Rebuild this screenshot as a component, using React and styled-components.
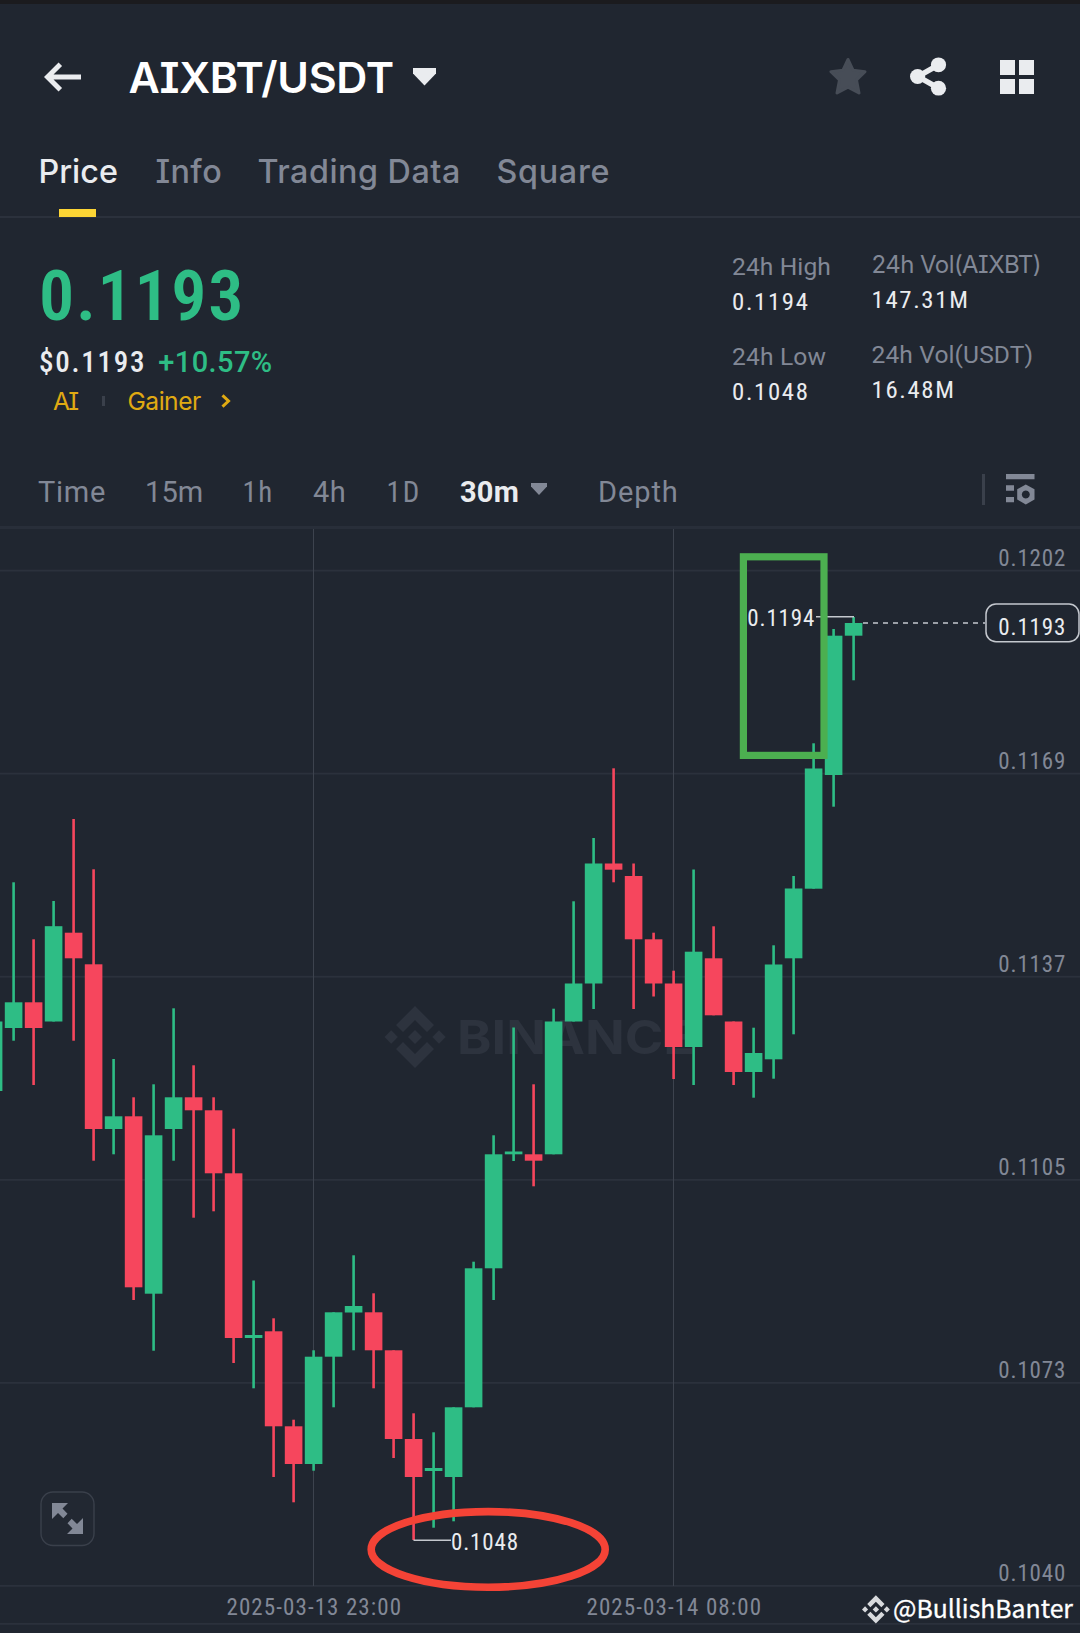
import styled, { createGlobalStyle } from 'styled-components';

const BG = '#202630';
const LINE = '#2b313c';
const GREY = '#828896';
const WHITE = '#EAECEF';
const GREEN = '#2EBD85';
const RED = '#F6465D';
const GOLD = '#E0AA12';

// [body top, body bottom, high, low, color]
const candles = [
  [1021.5, 1091, 1021.5, 1091, 'g'],
  [1002.3, 1028, 882.3, 1040.7, 'g'],
  [1002.3, 1028, 939.3, 1085, 'r'],
  [926.2, 1021.5, 901, 1021.5, 'g'],
  [932.7, 958.3, 819, 1040.7, 'r'],
  [964.3, 1129, 869.3, 1160.7, 'r'],
  [1116.3, 1129, 1059, 1154.3, 'g'],
  [1116.3, 1287.3, 1097.3, 1300, 'r'],
  [1135.3, 1293.7, 1084.3, 1350.7, 'g'],
  [1097.3, 1129, 1008.3, 1160.7, 'g'],
  [1097.3, 1110.3, 1065.3, 1217.7, 'r'],
  [1110.3, 1173.3, 1097.3, 1211.3, 'r'],
  [1173.3, 1338, 1128.7, 1363, 'r'],
  [1335, 1338, 1280.5, 1388.3, 'g'],
  [1331.3, 1426.3, 1318.3, 1477, 'r'],
  [1426.3, 1464, 1419.7, 1502.3, 'r'],
  [1356.7, 1464, 1350.3, 1470.7, 'g'],
  [1312.3, 1356.7, 1312.3, 1407.3, 'g'],
  [1306, 1312.5, 1255.3, 1350.3, 'g'],
  [1312.3, 1350.3, 1293.3, 1388.3, 'r'],
  [1350.3, 1439, 1350.3, 1458, 'r'],
  [1439, 1477, 1413.3, 1540, 'r'],
  [1468, 1471, 1432.3, 1527.7, 'g'],
  [1407.3, 1477, 1407.3, 1521.3, 'g'],
  [1268.3, 1407.3, 1261.7, 1407.3, 'g'],
  [1154.3, 1268.3, 1135.3, 1300, 'g'],
  [1151.5, 1154.3, 1027.5, 1161, 'g'],
  [1154.3, 1160.7, 1084.3, 1186.3, 'r'],
  [1021.5, 1154.3, 1008.7, 1154.3, 'g'],
  [983.5, 1021.5, 901.3, 1021.5, 'g'],
  [863.5, 983.5, 838, 1009, 'g'],
  [863.5, 869.7, 768.3, 882.3, 'r'],
  [876, 939.3, 863.5, 1009, 'r'],
  [939.3, 983.5, 932.7, 996.5, 'r'],
  [983.5, 1047, 970.7, 1079, 'r'],
  [951.7, 1047, 869.5, 1085, 'g'],
  [958.3, 1015.3, 926.3, 1015.3, 'r'],
  [1021.5, 1072, 1021.5, 1085, 'r'],
  [1053, 1072, 1027.7, 1097.7, 'g'],
  [964.5, 1059.3, 945.3, 1078.7, 'g'],
  [888.5, 958.3, 876, 1034.3, 'g'],
  [768.5, 888.7, 743.3, 888.7, 'g'],
  [635.7, 775, 629, 806.7, 'g'],
  [623, 635.7, 617, 680.3, 'g'],
];

const levels = [
  [570.7, '0.1202'],
  [773.7, '0.1169'],
  [976.8, '0.1137'],
  [1180, '0.1105'],
  [1383, '0.1073'],
  [1586, '0.1040'],
];

function Diamonds() {
  return (
    <>
      <path d="M30.5 0 L49.5 19 L42.5 26 L30.5 14 L18.5 26 L11.5 19 Z" />
      <path d="M30.5 62 L49.5 43 L42.5 36 L30.5 48 L18.5 36 L11.5 43 Z" />
      <path d="M30.5 24 L37.5 31 L30.5 38 L23.5 31 Z" />
      <path d="M6.7 24.3 L13.4 31 L6.7 37.7 L0 31 Z" />
      <path d="M54.5 24.3 L61.2 31 L54.5 37.7 L47.8 31 Z" />
    </>
  );
}

function Chart() {
  return (
    <ChartSvg viewBox="0 525 1080 1108">
      <rect x="0" y="526" width="1080" height="3" fill="#282e39" />
      {levels.map(([y]) => (
        <rect key={y} x="0" y={y - 1} width="1080" height="1.8" fill={LINE} />
      ))}
      <rect x="0" y="1623" width="1080" height="1.8" fill={LINE} />
      <rect x="313" y="529" width="1" height="1057" fill="#3d434e" />
      <rect x="673" y="529" width="1" height="1057" fill="#3d434e" />

      <g fill="#2d333e">
        <g transform="translate(384.5 1006)"><Diamonds /></g>
        <Brand x="457" y="1054" textLength="238" lengthAdjust="spacingAndGlyphs">BINANCE</Brand>
      </g>

      {candles.map(([top, bottom, high, low, c], i) => {
        const x = 13.6 + (i - 1) * 20;
        return (
          <g key={i} fill={c === 'g' ? GREEN : RED}>
            <rect x={x - 1.3} y={high} width="2.6" height={low - high} />
            <rect x={x - 8.8} y={top} width="17.6" height={bottom - top} />
          </g>
        );
      })}

      {levels.map(([y, label]) => (
        <Tick key={label} x="998.3" y={y - 5} textLength="67" fill={GREY}>{label}</Tick>
      ))}

      <line x1="863" y1="623" x2="985" y2="623" stroke="#c4c8ce" strokeWidth="1.5" strokeDasharray="5 5" />
      <rect x="986" y="604" width="93" height="37.7" rx="10" fill={BG} stroke="#c4c8ce" strokeWidth="1.5" />
      <Tick x="998.3" y="634.5" textLength="67" fill={WHITE}>0.1193</Tick>

      <line x1="816" y1="616.7" x2="854" y2="616.7" stroke="#c4c8ce" strokeWidth="1.6" />
      <Tick x="747.3" y="625.5" textLength="67" fill={WHITE}>0.1194</Tick>
      <rect x="743.4" y="556.8" width="80.6" height="198.6" fill="none" stroke="#4CAF50" strokeWidth="7.2" />

      <line x1="413.5" y1="1540.2" x2="451" y2="1540.2" stroke="#c4c8ce" strokeWidth="1.6" />
      <Tick x="451" y="1549.5" textLength="67" fill={WHITE}>0.1048</Tick>
      <ellipse cx="488.2" cy="1549.4" rx="117" ry="37.8" fill="none" stroke="#F44336" strokeWidth="7.6" />

      <Tick x="226.5" y="1614.5" textLength="174.5" fill={GREY}>2025-03-13 23:00</Tick>
      <Tick x="586.5" y="1614.5" textLength="174.5" fill={GREY}>2025-03-14 08:00</Tick>

      <rect x="41" y="1492" width="53" height="53.5" rx="12" fill="#222832" stroke="#3a404b" strokeWidth="1.4" />
      <g fill={GREY}>
        <path d="M52 1503 H68 L62.5 1508.5 L67.5 1513.8 L63.3 1518.3 L58 1513 L52 1519 Z" />
        <path d="M83 1534 H67 L72.5 1528.5 L67.5 1523.2 L71.7 1518.7 L77 1524 L83 1518 Z" />
      </g>

      <g fill="#D8DADD" transform="translate(862 1595.3) scale(.455)"><Diamonds /></g>
      <Handle x="893" y="1617.7" textLength="180" lengthAdjust="spacingAndGlyphs">@BullishBanter</Handle>
    </ChartSvg>
  );
}

export default function App() {
  return (
    <Screen>
      <GlobalStyle />
      <Header>
        <svg width="37" height="30" viewBox="0 0 37 30" fill="none" stroke={WHITE} strokeWidth="5">
          <path d="M16.3 2.3 L3.5 15 L16.3 27.7 M4 15 H37" />
        </svg>
        <Title>AIXBT/USDT</Title>
        <svg width="23" height="18" viewBox="0 0 23 18" fill={WHITE}>
          <path d="M0 0 H23 V5.5 L11.5 17.5 L0 5.5 Z" />
        </svg>
        <Actions>
          <svg width="38" height="39" viewBox="0 0 38 40" preserveAspectRatio="none" fill="#474d57" stroke="#474d57" strokeWidth="3" strokeLinejoin="round">
            <path d="M19 2.5 L24 13.5 L36 15 L27.5 23.5 L30 37 L19 31 L8 37 L10.5 23.5 L2 15 L14 13.5 Z" />
          </svg>
          <svg width="37" height="39" viewBox="0 0 37 40" preserveAspectRatio="none" fill={WHITE} stroke={WHITE}>
            <path d="M28.5 8 L8 20 L28.5 32" fill="none" strokeWidth="5.6" />
            <g stroke="none">
              <circle cx="28.5" cy="8" r="7.6" />
              <circle cx="7.6" cy="20" r="7.6" />
              <circle cx="28.5" cy="32" r="7.6" />
            </g>
          </svg>
          <svg width="34" height="34" viewBox="0 0 34 34" fill={WHITE}>
            <path d="M0 0 H15 V15 H0 Z M19 0 H34 V15 H19 Z M0 19 H15 V34 H0 Z M19 19 H34 V34 H19 Z" />
          </svg>
        </Actions>
      </Header>

      <Tabs>
        <Tab $active>Price</Tab>
        <Tab $spacing={0.4}>Info</Tab>
        <Tab $spacing={0.5}>Trading Data</Tab>
        <Tab $spacing={0.7}>Square</Tab>
      </Tabs>

      <Summary>
        <div>
          <LastPrice>0.1193</LastPrice>
          <Change>
            <Num $spacing={1.75} $stretch={75}>$0.1193</Num>
            <Num $color={GREEN} $spacing={0.4} $stretch={90}>+10.57%</Num>
          </Change>
          <Tags>
            <span>AI</span>
            <Divider $h={10} />
            <span>Gainer</span>
            <svg width="10" height="14" viewBox="0 0 10 14" fill="none" stroke={GOLD} strokeWidth="3">
              <path d="M1.5 1.3 L7.5 7 L1.5 12.7" />
            </svg>
          </Tags>
        </div>
        <Stats>
          <Stat>
            <Label $spacing={0.1}>24h High</Label>
            <Value>0.1194</Value>
            <Label $spacing={0.15}>24h Low</Label>
            <Value>0.1048</Value>
          </Stat>
          <Stat $up>
            <Label $inter $spacing={-0.55}>24h Vol(AIXBT)</Label>
            <Value>147.31M</Value>
            <Label $spacing={0.1}>24h Vol(USDT)</Label>
            <Value>16.48M</Value>
          </Stat>
        </Stats>
      </Summary>

      <Intervals>
        <Interval $stretch={90} $spacing={0.7}>Time</Interval>
        <Interval $stretch={90} $spacing={0.1}>15m</Interval>
        <Interval $stretch={75} $spacing={1.5}>1h</Interval>
        <Interval $stretch={90} $spacing={0.5}>4h</Interval>
        <Interval $stretch={75} $spacing={2}>1D</Interval>
        <Interval $active $stretch={90} $spacing={0.2}>
          30m
          <svg width="16" height="12" viewBox="0 0 16 12" fill={GREY}>
            <path d="M0 0 H16 V3.5 L8 12 L0 3.5 Z" />
          </svg>
        </Interval>
        <Interval $stretch={90} $spacing={0.9}>Depth</Interval>
        <Settings>
          <Divider $h={30.5} />
          <svg width="29" height="30.5" viewBox="0 0 29 31" preserveAspectRatio="none" fill={GREY}>
            <path d="M0 0 H28.5 V5.3 H0 Z M0 11.5 H8 V17 H0 Z M0 23.3 H8 V28.8 H0 Z" />
            <path fillRule="evenodd" d="M19.8 10.7 L28.5 15.5 V26 L19.8 31 L11.2 26 V15.5 Z M19.8 16.8 A4 4 0 1 0 19.81 16.8 Z" />
          </svg>
        </Settings>
      </Intervals>

      <Chart />
    </Screen>
  );
}

const GlobalStyle = createGlobalStyle`
  body {
    margin: 0;
    background: ${BG};
  }
  svg {
    display: block;
    flex-shrink: 0;
  }
`;

const Screen = styled.div`
  width: 1080px;
  height: 1633px;
  box-sizing: border-box;
  border-top: 4px solid #1b1b1e;
  overflow: hidden;
  background: ${BG};
  font-family: Roboto, sans-serif;
  white-space: nowrap;
`;

const Header = styled.header`
  height: 145px;
  box-sizing: border-box;
  padding: 0 46px 0 43.5px;
  display: flex;
  align-items: center;
`;

const Title = styled.h1`
  margin: 0 19px 0 48px;
  width: 265.5px;
  font-family: Inter, sans-serif;
  font-feature-settings: 'cv08';
  font-size: 43px;
  line-height: 56px;
  font-weight: 600;
  letter-spacing: -0.3px;
  color: #fff;
`;

const Actions = styled.div`
  margin-left: auto;
  display: flex;
  align-items: center;

  svg:nth-child(2) {
    margin: 0 53px 0 43.5px;
  }
`;

const Tabs = styled.nav`
  height: 67px;
  padding-left: 38.5px;
  display: grid;
  grid-template-columns: 117px 102px 239px auto;
  border-bottom: 2px solid ${LINE};
`;

const Tab = styled.div`
  position: relative;
  font-family: Inter, sans-serif;
  font-feature-settings: 'cv08';
  font-size: 32.3px;
  line-height: 46px;
  font-weight: 500;
  letter-spacing: ${p => p.$spacing || 0}px;
  color: ${p => (p.$active ? WHITE : GREY)};

  &::after {
    content: '';
    display: ${p => (p.$active ? 'block' : 'none')};
    position: absolute;
    left: 20.5px;
    top: 59.5px;
    width: 37px;
    height: 8px;
    background: #fcd535;
  }
`;

const Summary = styled.section`
  height: 240px;
  box-sizing: border-box;
  padding-left: 39px;
  display: flex;
`;

const LastPrice = styled.div`
  margin-top: 47.5px;
  font-size: 70px;
  line-height: 60px;
  font-weight: 600;
  font-stretch: 75%;
  letter-spacing: 1.7px;
  color: ${GREEN};
`;

const Change = styled.div`
  margin-top: 18px;
  display: flex;
  gap: 12px;
`;

const Num = styled.span`
  font-size: 29px;
  line-height: 36px;
  font-weight: 500;
  font-stretch: ${p => p.$stretch}%;
  letter-spacing: ${p => p.$spacing}px;
  color: ${p => p.$color || WHITE};
`;

const Tags = styled.div`
  margin: 6.5px 0 0 14px;
  display: flex;
  align-items: center;
  font-family: Inter, sans-serif;
  font-feature-settings: 'cv08';
  font-size: 24.6px;
  line-height: 30px;
  letter-spacing: -0.5px;
  color: ${GOLD};

  span:first-child {
    width: 49px;
    letter-spacing: -1.6px;
  }

  span:nth-child(3) {
    width: 93px;
    margin-left: 23px;
  }
`;

const Divider = styled.i`
  width: 2.5px;
  height: ${p => p.$h}px;
  background: #3a404b;
`;

const Stats = styled.div`
  margin-left: auto;
  width: 348px;
  display: grid;
  grid-template-columns: 139.5px auto;
  align-content: start;
`;

const Stat = styled.div`
  padding-top: ${p => (p.$up ? 32 : 34)}px;
`;

const Label = styled.div`
  font-family: ${p => (p.$inter ? 'Inter' : 'Roboto')}, sans-serif;
  font-feature-settings: 'cv08';
  font-size: ${p => (p.$inter ? 24 : 24.6)}px;
  line-height: 30px;
  font-stretch: 90%;
  letter-spacing: ${p => p.$spacing}px;
  color: ${GREY};
`;

const Value = styled.div`
  margin: 4.5px 0 25.5px;
  font-size: 24.8px;
  line-height: 30px;
  font-stretch: 75%;
  letter-spacing: 1.65px;
  color: ${WHITE};
`;

const Intervals = styled.div`
  height: 67px;
  box-sizing: border-box;
  padding: 0 45.5px 0 38px;
  display: grid;
  grid-template-columns: 107px 97.5px 70.5px 73.5px 73.5px 138px auto auto;
  align-items: center;
`;

const Interval = styled.div`
  display: flex;
  align-items: center;
  font-size: 29px;
  line-height: 36px;
  font-weight: ${p => (p.$active ? 700 : 400)};
  font-stretch: ${p => p.$stretch}%;
  letter-spacing: ${p => p.$spacing}px;
  color: ${p => (p.$active ? WHITE : GREY)};

  svg {
    margin: -6px 0 0 11.5px;
  }
`;

const Settings = styled.div`
  justify-self: end;
  margin-top: -4px;
  display: flex;
  gap: 21px;
`;

const ChartSvg = styled.svg`
  width: 1080px;
  height: 1108px;
  font-family: Roboto, sans-serif;
`;

const Tick = styled.text`
  font-size: 23px;
  font-stretch: 75%;
`;

const Brand = styled.text`
  font-family: Inter, sans-serif;
  font-size: 46.5px;
  font-weight: 700;
`;

const Handle = styled.text`
  font-family: 'Noto Sans CJK SC', sans-serif;
  font-size: 24.6px;
  font-weight: 400;
  fill: #fff;
  stroke: #fff;
  stroke-width: 0.3px;
`;
